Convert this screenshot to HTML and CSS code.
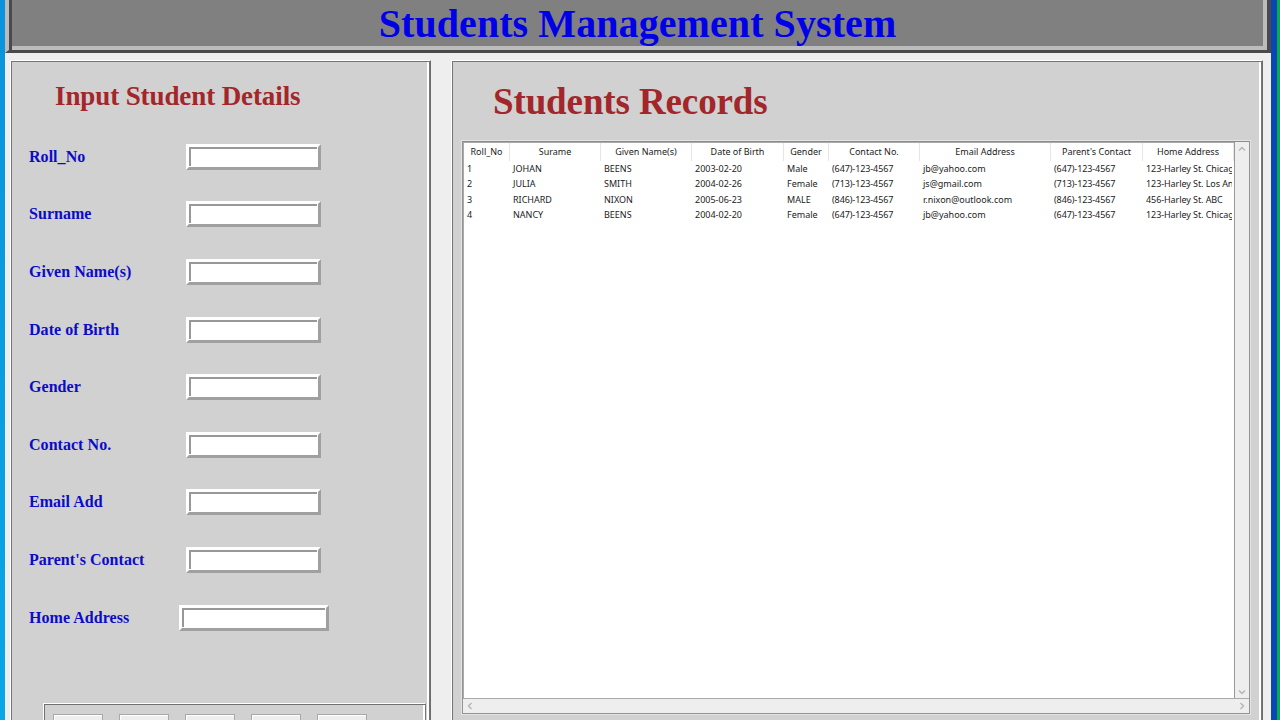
FILE: index.html
```
<!DOCTYPE html>
<html lang="en">
<head>
  <meta charset="UTF-8" />
  <meta name="viewport" content="width=device-width, initial-scale=1.0"/>
  <title>Students Management System</title>
  <link rel="stylesheet" href="styles.css">
</head>
<body>
  <div class="window">
    <header class="title-frame">
      <h1>Students Management System</h1>
    </header>

    <div class="content">
      <!-- Input form -->
      <section class="panel details">
        <h2>Input Student Details</h2>
        <form id="student-form">
          <div class="field"><label for="roll">Roll_No</label><input id="roll" type="text" /></div>
          <div class="field"><label for="surname">Surname</label><input id="surname" type="text" /></div>
          <div class="field"><label for="given">Given Name(s)</label><input id="given" type="text" /></div>
          <div class="field"><label for="dob">Date of Birth</label><input id="dob" type="text" /></div>
          <div class="field"><label for="gender">Gender</label><input id="gender" type="text" /></div>
          <div class="field"><label for="contact">Contact No.</label><input id="contact" type="text" /></div>
          <div class="field"><label for="email">Email Add</label><input id="email" type="text" /></div>
          <div class="field"><label for="parent">Parent's Contact</label><input id="parent" type="text" /></div>
          <div class="field"><label for="address">Home Address</label><input id="address" class="wide" type="text" /></div>
        </form>
        <div class="buttons">
          <button type="button"></button>
          <button type="button"></button>
          <button type="button"></button>
          <button type="button"></button>
          <button type="button"></button>
        </div>
      </section>

      <!-- Records table -->
      <section class="panel records">
        <h2>Students Records</h2>
        <div class="table-frame">
          <div class="table-area">
            <table>
              <colgroup>
                <col class="c-roll"><col class="c-name"><col class="c-name"><col class="c-dob"><col class="c-gender">
                <col class="c-name"><col class="c-email"><col class="c-parent"><col class="c-name">
              </colgroup>
              <thead>
                <tr><th>Roll_No</th><th>Surame</th><th>Given Name(s)</th><th>Date of Birth</th><th>Gender</th><th>Contact No.</th><th>Email Address</th><th>Parent's Contact</th><th>Home Address</th></tr>
              </thead>
              <tbody>
                <tr><td>1</td><td>JOHAN</td><td>BEENS</td><td>2003-02-20</td><td>Male</td><td class="phone">(647)-123-4567</td><td>jb@yahoo.com</td><td class="phone">(647)-123-4567</td><td class="address"><div>123-Harley St. Chicago</div></td></tr>
                <tr><td>2</td><td>JULIA</td><td>SMITH</td><td>2004-02-26</td><td>Female</td><td class="phone">(713)-123-4567</td><td>js@gmail.com</td><td class="phone">(713)-123-4567</td><td class="address"><div>123-Harley St. Los Angeles</div></td></tr>
                <tr><td>3</td><td>RICHARD</td><td>NIXON</td><td>2005-06-23</td><td>MALE</td><td class="phone">(846)-123-4567</td><td>r.nixon@outlook.com</td><td class="phone">(846)-123-4567</td><td class="address"><div>456-Harley St. ABC</div></td></tr>
                <tr><td>4</td><td>NANCY</td><td>BEENS</td><td>2004-02-20</td><td>Female</td><td class="phone">(647)-123-4567</td><td>jb@yahoo.com</td><td class="phone">(647)-123-4567</td><td class="address"><div>123-Harley St. Chicago</div></td></tr>
              </tbody>
            </table>
          </div>
          <div class="scroll-y">
            <svg width="8" height="6" viewBox="0 0 8 6"><path d="M1 4.5 4 1.5 7 4.5"/></svg>
            <svg width="8" height="6" viewBox="0 0 8 6"><path d="M1 1.5 4 4.5 7 1.5"/></svg>
          </div>
          <div class="scroll-x">
            <svg width="6" height="8" viewBox="0 0 6 8"><path d="M4.5 1 1.5 4 4.5 7"/></svg>
            <svg width="6" height="8" viewBox="0 0 6 8"><path d="M1.5 1 4.5 4 1.5 7"/></svg>
          </div>
        </div>
      </section>
    </div>
  </div>
</body>
</html>
```
FILE: styles.css
```
* {
  box-sizing: border-box;
}
body {
  margin: 0;
  height: 720px;
  overflow: hidden;
  display: flex;
  font-family: "Liberation Serif", "Times New Roman", serif;
  background: linear-gradient(#0a93dc, #0aa6e6);
  border-right: 3px solid #00b04f;
}
.window {
  width: 1272px;
  margin-left: 5px;
  height: 720px;
  background: #eee;
  border-right: 6px solid #0a45b6;
}
.title-frame {
  height: 53px;
  background: #808080;
  border: solid;
  border-width: 0 4px 3px 4px;
  border-color: #4a4a4c #4a4a4c #4a4a4c #bbb;
  box-shadow: inset 3px 0 #4a4a4c, inset -4px -4px #bcbcbc;
}
h1 {
  margin: 0;
  padding-right: 1px;
  text-align: center;
  color: #0000e8;
  font-size: 40px;
  letter-spacing: 0.08px;
  line-height: 48px;
}
.content {
  display: flex;
  gap: 20px;
  padding: 7px 0 0 5px;
}
.panel {
  background: #d1d1d1;
  height: 660px;
  border: 1px solid #fff;
  border-right-color: #6c6c6c;
  border-bottom: none;
  box-shadow: inset 1px 1px #757575, inset -1px 0 #777, inset -3px 0 #fff;
}
.panel h2 {
  margin: 0;
  color: #a3262a;
}
.details {
  width: 421px;
}
.details h2 {
  padding: 18px 0 0 44px;
  font-size: 27px;
  letter-spacing: -0.1px;
  line-height: 34px;
}
.details form {
  padding-top: 15px;
}
.field {
  display: flex;
  align-items: center;
  height: 57.6px;
  padding-left: 18px;
}
.field label {
  width: 157px;
  color: #0c0cc8;
  font-size: 16px;
  font-weight: bold;
  letter-spacing: 0.04px;
}
.field input {
  width: 135px;
  height: 26px;
  padding: 0;
  border: 3px solid #fff;
  border-right-color: #a0a0a0;
  border-bottom-color: #a0a0a0;
  background: #fff;
  box-shadow: inset -1px -1px #fff, inset 2px 2px #989898;
}
.field .wide {
  width: 150px;
  margin-left: -7px;
}
.buttons {
  display: flex;
  gap: 16px;
  width: 383px;
  height: 17px;
  margin: 57px 0 0 32px;
  padding: 10px 0 0 9px;
  border: 1px solid #fff;
  border-right-color: #777;
  border-bottom: none;
  box-shadow: inset 1px 1px #707070, inset -2px 0 #fff;
}
.buttons button {
  width: 50px;
  height: 6px;
  padding: 0;
  border: 1px solid #a8a8a8;
  border-bottom: none;
  background: #eee;
  box-shadow: inset 1px 1px #fff;
}
.records {
  width: 812px;
  padding: 20px 0 0 9px;
}
.records h2 {
  padding-left: 32px;
  font-size: 37px;
  letter-spacing: -0.12px;
  line-height: 42px;
}
.table-frame {
  display: grid;
  grid-template-columns: 771px 15px;
  grid-template-rows: 556px 15px;
  width: 790px;
  height: 575px;
  margin-top: 17px;
  border: 2px solid #929292;
  border-top-color: #8c8c8c;
  box-shadow: inset 1px 1px #aaa;
  outline: 1px solid #e4e4e4;
  outline-offset: -1px;
}
.table-area {
  overflow: hidden;
  margin: 1px 0 0 1px;
  background: #fff;
}
table {
  width: 770px;
  table-layout: fixed;
  border-collapse: separate;
  border-spacing: 0;
  font-family: "Noto Sans", "Segoe UI", sans-serif;
  font-size: 9px;
  color: #222;
}
.c-roll { width: 46px; }
.c-name { width: 91px; }
.c-dob { width: 92px; }
.c-gender { width: 45px; }
.c-email { width: 131px; }
.c-parent { width: 92px; }
th {
  height: 18px;
  padding: 0 0 1px;
  font-weight: normal;
  line-height: 15px;
  border-right: 1px solid #e6e6e6;
}
td {
  height: 15.4px;
  padding: 0 0 0 3px;
  line-height: 15.4px;
  white-space: nowrap;
}
td div {
  width: 86px;
  overflow: hidden;
}
.phone {
  letter-spacing: -0.1px;
}
.address {
  letter-spacing: -0.08px;
}
.scroll-y,
.scroll-x {
  display: flex;
  justify-content: space-between;
  align-items: center;
  background: #eee;
}
.scroll-y {
  flex-direction: column;
  padding: 4px 0 3px;
  border-left: 1px solid #999;
}
.scroll-x {
  grid-column: 1 / 3;
  padding: 0 4px;
  border-top: 1px solid #aaa;
}
svg path {
  fill: none;
  stroke: #b4b4b4;
  stroke-width: 1.4;
}
```
